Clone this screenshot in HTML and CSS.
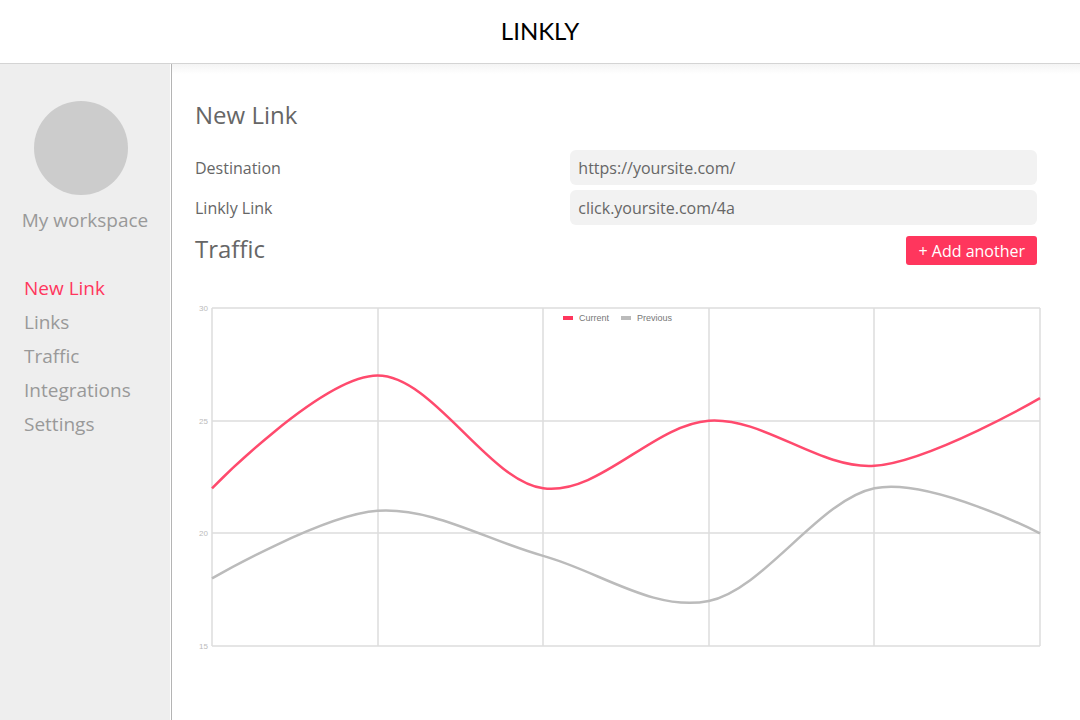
FILE: index.html
```
<!DOCTYPE html>
<html lang="en">
<head>
	<meta charset="UTF-8">
	<meta name="viewport" content="width=device-width, initial-scale=1">
	<title>Linkly</title>
	<link rel="stylesheet" href="styles.css">
</head>
<body>
<header class="header">
	<span class="logo">LINKLY</span>
</header>
<div class="wrapper">
	<aside class="sidebar">
		<div class="avatar"></div>
		<p class="workspace">My workspace</p>
		<nav class="menu">
			<a class="active" href="#new">New Link</a>
			<a href="#links">Links</a>
			<a href="#traffic">Traffic</a>
			<a href="#integrations">Integrations</a>
			<a href="#settings">Settings</a>
		</nav>
	</aside>
	<main class="content">
		<form class="form" id="new">
			<h2>New Link</h2>
			<div class="row">
				<label for="destination">Destination</label>
				<input id="destination" type="text" value="https://yoursite.com/">
			</div>
			<div class="row">
				<label for="link">Linkly Link</label>
				<input id="link" type="text" value="click.yoursite.com/4a">
			</div>
			<div class="bar">
				<h2 id="traffic">Traffic</h2>
				<button type="button">+ Add another</button>
			</div>
		</form>
		<svg class="chart" viewBox="0 0 847 350" role="img" aria-label="Traffic">
			<g class="grid"></g>
			<g class="legend">
				<rect class="current" x="368" y="16" width="10" height="4"/>
				<text x="384" y="21">Current</text>
				<rect class="previous" x="426" y="16" width="10" height="4"/>
				<text x="442" y="21">Previous</text>
			</g>
			<path class="line previous"/>
			<path class="line current"/>
		</svg>
	</main>
</div>
<script>
	const current = [22, 27, 22, 25, 23, 26];
	const previous = [18, 21, 19, 17, 22, 20];
	// plot area inside the svg
	const area = {left: 17, right: 845, top: 8, bottom: 346};
	const min = 15;
	const max = 30;
	const grid = document.querySelector('.grid');

	function getX(i) {
		return area.left + (area.right - area.left) * i / (current.length - 1);
	}

	function getY(value) {
		return area.bottom - (area.bottom - area.top) * (value - min) / (max - min);
	}

	// grid lines and labels
	function drawGrid() {
		let html = '';
		for (let v = min; v <= max; v += 5) {
			const y = Math.round(getY(v));
			html += `<line x1="${area.left}" x2="${area.right}" y1="${y}" y2="${y}"/>`;
			html += `<text x="${area.left - 4}" y="${y + 3}">${v}</text>`;
		}
		for (let i = 0; i < current.length; i++) {
			const x = Math.round(getX(i));
			html += `<line x1="${x}" x2="${x}" y1="${area.top}" y2="${area.bottom}"/>`;
		}
		grid.innerHTML = html;
	}

	// smooth curve through all the points
	function drawLine(selector, data) {
		const points = data.map((v, i) => ({x: getX(i), y: getY(v)}));
		const last = points.length - 1;
		let d = `M${points[0].x} ${points[0].y}`;
		for (let i = 1; i <= last; i++) {
			const p = points[i - 1];
			const q = points[i];
			const before = points[i - 2];
			const after = points[i + 1];
			// the end points have no handle
			const c1 = before ? {x: p.x + (q.x - before.x) / 6, y: p.y + (q.y - before.y) / 6} : p;
			const c2 = after ? {x: q.x - (after.x - p.x) / 6, y: q.y - (after.y - p.y) / 6} : q;
			d += ` C${c1.x} ${c1.y} ${c2.x} ${c2.y} ${q.x} ${q.y}`;
		}
		document.querySelector(selector).setAttribute('d', d);
	}

	drawGrid();
	drawLine('.line.current', current);
	drawLine('.line.previous', previous);
</script>
</body>
</html>
```
FILE: styles.css
```
* {
	box-sizing: border-box;
}

body {
	margin: 0;
	min-height: 100vh;
	display: flex;
	flex-direction: column;
	background: #FFF;
	color: #666;
	font-family: "Open Sans", sans-serif;
	font-size: 16px;
}

.header {
	height: 64px;
	display: flex;
	align-items: center;
	justify-content: center;
	padding-bottom: 2px;
	border-bottom: 1px solid #D4D4D4;
}

.logo {
	color: #000;
	font-family: Lato, sans-serif;
	font-size: 24px;
}

.wrapper {
	flex: 1;
	display: flex;
}

.sidebar {
	width: 170px;
	flex-shrink: 0;
	padding: 37px 8px 24px 0;
	background: #EEE;
	color: #999;
	font-size: 19px;
}

.avatar {
	width: 94px;
	height: 94px;
	margin: 0 auto;
	border-radius: 50%;
	background: #CCC;
}

.workspace {
	margin: 8px 0 34px;
	line-height: 34px;
	text-align: center;
	padding-left: 8px;
}

.menu {
	display: flex;
	flex-direction: column;
	padding-left: 24px;
	line-height: 34px;
}

.menu a {
	color: #999;
	text-decoration: none;
}

.menu .active {
	color: #FF365D;
}

.content {
	flex: 1;
	margin-left: 1px;
	padding: 32px 38px 24px 23px;
	border-left: 1px solid #B4B4B4;
	background: linear-gradient(#F4F4F4, #FFF 10px);
}

.form {
	margin-right: 5px;
}

.form h2 {
	margin: 0;
	font-size: 24px;
	font-weight: normal;
	line-height: 38px;
}

.form > h2 {
	margin-bottom: 16px;
}

.row {
	display: grid;
	grid-template-columns: 4fr 5fr;
	column-gap: 2px;
	align-items: center;
	margin-bottom: 5px;
}

.row input {
	width: 100%;
	height: 35px;
	padding: 0 8px;
	border: none;
	border-radius: 6px;
	outline: none;
	background: #F2F2F2;
	color: #666;
	font: inherit;
}

.bar {
	display: flex;
	align-items: flex-end;
	justify-content: space-between;
}

.bar button {
	height: 29px;
	margin-bottom: 3px;
	padding: 0 12px;
	border: none;
	border-radius: 3px;
	background: #FF365D;
	color: #FFF;
	font: inherit;
	cursor: pointer;
}

.chart {
	display: block;
	width: 100%;
	margin-top: 32px;
}

.chart text {
	font-family: "Liberation Sans", sans-serif;
	font-size: 8px;
}

.grid line {
	stroke: #DDD;
	stroke-width: 1.5;
}

.grid text {
	fill: #BBB;
	text-anchor: end;
}

.chart .legend text {
	fill: #777;
	font-size: 9px;
}

.legend .current {
	fill: #FF365D;
}

.legend .previous {
	fill: #BBB;
}

.line {
	fill: none;
	stroke-width: 2.5;
}

.line.current {
	stroke: #FF4A6D;
}

.line.previous {
	stroke: #BBB;
}
```
